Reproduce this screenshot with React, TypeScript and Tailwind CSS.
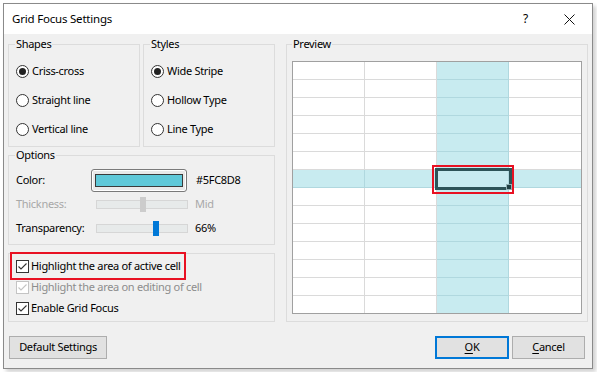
import React from 'react';

const ROWS = 14;
const COLS = 4;
const HI_ROW = 6;
const HI_COL = 2;

function Radio({ checked, label }: { checked?: boolean; label: string }) {
  return (
    <div className="flex h-[29px] items-center pl-[1px]">
      <span className="flex h-[13px] w-[13px] items-center justify-center rounded-full border border-[#333] bg-white">
        {checked && <span className="h-[7px] w-[7px] rounded-full bg-[#222]" />}
      </span>
      <span className="ml-[3px]">{label}</span>
    </div>
  );
}

function Check({ label, disabled }: { label: string; disabled?: boolean }) {
  return (
    <div className="flex h-[21px] items-center pl-[7px]">
      <span
        className={
          disabled
            ? 'flex h-[13px] w-[13px] items-center justify-center border border-[#c4c4c4] bg-white'
            : 'flex h-[13px] w-[13px] items-center justify-center border border-[#333] bg-white'
        }
      >
        <svg width="11" height="11" viewBox="0 0 11 11">
          <path d="M1.5 5.5 L4 8 L9.5 2.5" fill="none" stroke={disabled ? '#c4c4c4' : '#333'} strokeWidth="1.1" />
        </svg>
      </span>
      <span className={disabled ? 'ml-[2px] text-[#8d8d8d]' : 'ml-[2px]'}>{label}</span>
    </div>
  );
}

function Slider({ pos, active }: { pos: number; active?: boolean }) {
  return (
    <div className="relative ml-[5px] h-[9px] w-[92px] border border-[#d6d6d6] bg-[#e7eaea]">
      <span
        className={
          active
            ? 'absolute top-[-4px] h-[15px] w-[6px] bg-[#0078d7]'
            : 'absolute top-[-4px] h-[15px] w-[6px] bg-[#cccccc]'
        }
        style={{ left: pos }}
      />
    </div>
  );
}

export default function App() {
  return (
    <div className="h-[372px] w-[597px] bg-white font-['Noto_Sans',sans-serif] text-[11px] tracking-[-0.3px] text-black">
      <div className="ml-[3px] mt-[3px] flex h-[366px] w-[590px] flex-col border border-[#8a8a8a] shadow-[3px_3px_4px_rgba(0,0,0,0.18)]">
        {/* title bar */}
        <div className="flex h-[30px] items-center bg-white">
          <span className="pl-[8px] text-[11.5px] tracking-[-0.2px]">Grid Focus Settings</span>
          <span className="ml-auto flex w-[46px] justify-center pl-[3px] text-[12px]">?</span>
          <span className="flex w-[45px] justify-center">
            <svg width="11" height="11" viewBox="0 0 11 11">
              <path d="M0.5 0.5 L10.5 10.5 M10.5 0.5 L0.5 10.5" stroke="#111" strokeWidth="1" />
            </svg>
          </span>
        </div>

        {/* body */}
        <div className="flex flex-1 flex-col bg-[#f0f0f0] px-[4px] pt-[2px]">
          <div className="flex">
            <div className="flex w-[267px] flex-col">
              <div className="flex gap-[3px]">
                <fieldset className="h-[111px] w-[132px] border border-[#dcdcdc] pl-[6px] pt-[5px]">
                  <legend className="px-[1px] leading-[16px]">Shapes</legend>
                  <Radio checked label="Criss-cross" />
                  <Radio label="Straight line" />
                  <Radio label="Vertical line" />
                </fieldset>
                <fieldset className="h-[111px] w-[132px] border border-[#dcdcdc] pl-[6px] pt-[5px]">
                  <legend className="px-[1px] leading-[16px]">Styles</legend>
                  <Radio checked label="Wide Stripe" />
                  <Radio label="Hollow Type" />
                  <Radio label="Line Type" />
                </fieldset>
              </div>

              <fieldset className="h-[98px] border border-[#dcdcdc] pl-[6px]">
                <legend className="px-[1px] leading-[16px]">Options</legend>
                <div className="mt-[6px] flex h-[23px] items-center">
                  <span className="w-[76px] pl-[1px]">Color:</span>
                  <div className="flex h-[23px] w-[96px] items-center rounded-[3px] border border-[#7a7a7a] bg-[#e9e9e9] px-[3px] shadow-[inset_0_0_0_1px_#fff]">
                    <div className="h-[13px] w-full border border-[#3a3a3a] bg-[#5FC8D8]" />
                  </div>
                  <span className="ml-[9px]">#5FC8D8</span>
                </div>
                <div className="flex h-[24px] items-center">
                  <span className="w-[76px] pl-[1px] text-[#a8a8a8]">Thickness:</span>
                  <Slider pos={43} />
                  <span className="ml-[7px] text-[#a8a8a8]">Mid</span>
                </div>
                <div className="flex h-[24px] items-center">
                  <span className="w-[76px] pl-[1px]">Transparency:</span>
                  <Slider pos={56} active />
                  <span className="ml-[7px]">66%</span>
                </div>
              </fieldset>

              <div className="relative mt-[8px] h-[69px] border border-[#dcdcdc] pt-[2px]">
                <Check label="Highlight the area of active cell" />
                <Check label="Highlight the area on editing of cell" disabled />
                <Check label="Enable Grid Focus" />
                <span className="absolute left-[1px] top-[-2px] h-[28px] w-[176px] border-2 border-[#e81123]" />
              </div>
            </div>

            <fieldset className="ml-[11px] h-[286px] w-[302px] border border-[#dcdcdc] px-[5px] pt-[9px]">
              <legend className="px-[1px] leading-[16px]">Preview</legend>
              <div className="relative grid h-[253px] w-[290px] grid-cols-4 border border-[#a0a0a0] bg-white">
                {Array.from({ length: ROWS * COLS }).map((_, i) => {
                  const r = Math.floor(i / COLS);
                  const c = i % COLS;
                  const hi = r === HI_ROW || c === HI_COL;
                  const lastRow = r === ROWS - 1;
                  const lastCol = c === COLS - 1;
                  let cls = lastRow ? 'h-[17px]' : 'h-[18px] border-b';
                  if (!lastCol) cls += ' border-r';
                  cls += hi ? ' bg-[#c8ebf0] border-[#b0d8df]' : ' border-[#dadada]';
                  return <div key={i} className={cls} />;
                })}
                <span className="absolute left-[142px] top-[106px] h-[22px] w-[77px] border-[3px] border-[#2d5357]" />
                <span className="absolute left-[213px] top-[122px] h-[6px] w-[6px] border border-[#8fb0b4] bg-[#1f3e42]" />
                <span className="absolute left-[139px] top-[103px] h-[29px] w-[82px] border-2 border-[#e81123]" />
              </div>
            </fieldset>
          </div>

          <div className="mt-[14px] flex pl-[1px] pr-[3px]">
            <button className="h-[23px] w-[98px] border border-[#adadad] bg-[#e1e1e1]">Default Settings</button>
            <button className="ml-auto h-[23px] w-[74px] border-2 border-[#0078d7] bg-[#e1e1e1]">
              <span className="underline underline-offset-2">O</span>K
            </button>
            <button className="ml-[3px] h-[23px] w-[73px] border border-[#adadad] bg-[#e1e1e1]">
              <span className="underline underline-offset-2">C</span>ancel
            </button>
          </div>
        </div>
      </div>
    </div>
  );
}
